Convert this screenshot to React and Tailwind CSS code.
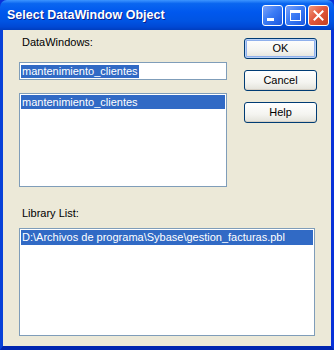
import React from "react";

const uiFont = { fontFamily: '"Liberation Sans", Arial, sans-serif' };

function XPButton({ children, isDefault }) {
  return (
    <div
      className={
        "h-[21px] w-[73px] rounded-[3px] border border-[#003C74] flex items-center justify-center text-[11px] text-black bg-[linear-gradient(to_bottom,#FFFFFF_0%,#F4F4F0_60%,#E3E2DA_100%)] " +
        (isDefault ? "shadow-[inset_0_0_0_1px_#B9D1F7,inset_0_0_0_2px_#8FB0EC]" : "shadow-[inset_0_-1px_0_#D6D0C5]")
      }
      style={uiFont}
    >
      {children}
    </div>
  );
}

function CaptionBtn({ children, red }) {
  return (
    <div
      className={
        "w-[21px] h-[21px] rounded-[3px] border border-white flex items-center justify-center " +
        (red
          ? "bg-[linear-gradient(135deg,#F0987A_0%,#E2583E_45%,#C7401F_100%)]"
          : "bg-[linear-gradient(135deg,#7DA2F8_0%,#3C7CF5_45%,#1B57E0_100%)]")
      }
    >
      {children}
    </div>
  );
}

export default function App() {
  return (
    <div className="w-[334px] h-[350px] flex flex-col bg-[#0831D9] overflow-hidden" style={uiFont}>
      {/* title bar */}
      <div className="h-[30px] shrink-0 rounded-t-[7px] flex items-center pl-[7px] pr-[5px] bg-[linear-gradient(to_bottom,#3D95FF_0%,#0A66F0_12%,#0058EE_40%,#0054E3_70%,#0048D4_90%,#003DBE_100%)]">
        <div
          className="flex-1 text-white font-bold text-[12.5px] pt-[1px] [text-shadow:1px_1px_0_#0A1E8C]"
          style={{ fontFamily: '"Liberation Sans", Arial, sans-serif' }}
        >
          Select DataWindow Object
        </div>
        <div className="flex gap-[2px]">
          <CaptionBtn>
            <div className="w-[7px] h-[3px] bg-white mt-[9px] mr-[4px]" />
          </CaptionBtn>
          <CaptionBtn>
            <div className="w-[11px] h-[11px] border border-white border-t-[3px]" />
          </CaptionBtn>
          <CaptionBtn red>
            <svg width="11" height="11" viewBox="0 0 11 11">
              <path d="M1.5 1.5 L9.5 9.5 M9.5 1.5 L1.5 9.5" stroke="white" strokeWidth="2" strokeLinecap="square" />
            </svg>
          </CaptionBtn>
        </div>
      </div>
      {/* body */}
      <div className="flex-1 flex flex-col border-l-[3px] border-r-[3px] border-b-[4px] border-l-[#0841D8] border-r-[#0831D9] border-b-[#0025B0]">
        <div className="flex-1 bg-[#ECE9D8] pl-[16px] pt-[6px] text-[11px] text-black whitespace-nowrap">
          <div className="flex">
            <div className="w-[208px] flex flex-col">
              <div className="h-[13px] leading-[13px] pl-[3px]">DataWindows:</div>
              <div className="mt-[13px] h-[18px] border border-[#7F9DB9] bg-white flex items-center pl-[1px]">
                <span className="bg-[#316AC5] text-white leading-[13px] px-[1px]">mantenimiento_clientes</span>
              </div>
              <div className="mt-[13px] h-[94px] border border-[#7F9DB9] bg-white p-[1px]">
                <div className="h-[14px] leading-[14px] bg-[#316AC5] text-white pl-[1px]">mantenimiento_clientes</div>
              </div>
            </div>
            <div className="ml-[17px] flex flex-col gap-[11px] pt-[2px]">
              <XPButton isDefault>OK</XPButton>
              <XPButton>Cancel</XPButton>
              <XPButton>Help</XPButton>
            </div>
          </div>
          <div className="mt-[20px] h-[13px] leading-[13px] pl-[3px]">Library List:</div>
          <div className="mt-[8px] w-[296px] h-[108px] border border-[#7F9DB9] bg-white p-[1px]">
            <div className="h-[15px] leading-[15px] bg-[#316AC5] text-white pl-[1px] whitespace-nowrap">
              {"D:\\Archivos de programa\\Sybase\\gestion_facturas.pbl"}
            </div>
          </div>
        </div>
      </div>
    </div>
  );
}
